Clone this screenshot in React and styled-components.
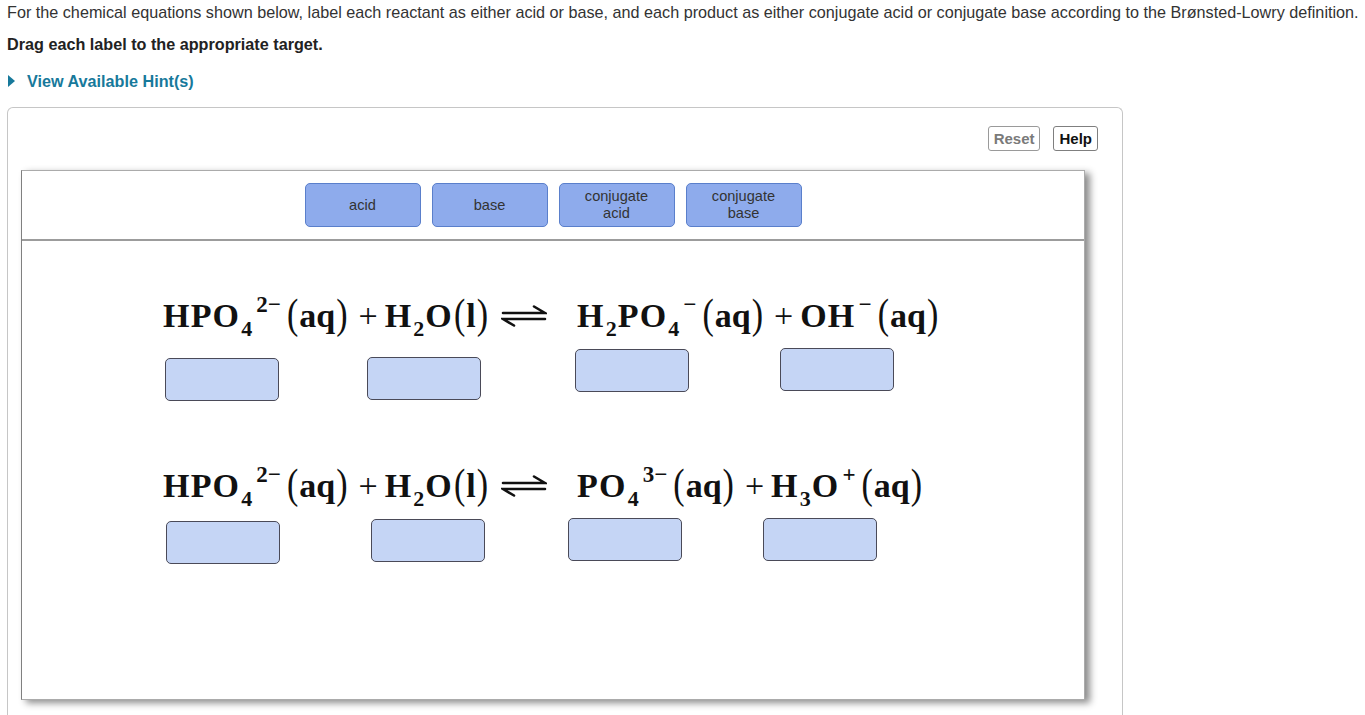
import React from "react";
import styled, { createGlobalStyle } from "styled-components";

const GlobalStyle = createGlobalStyle`
    html, body {
        margin: 0;
        padding: 0;
        overflow: hidden;
        background: #fff;
        font-family: "Liberation Sans", Arial, sans-serif;
        color: #333;
    }
`;

const Page = styled.div`
    padding: 3px 0 0 7px;
`;

const Prompt = styled.p`
    margin: 0;
    font-size: 16.2px;
    line-height: 18px;
    white-space: nowrap;
`;

const Instruction = styled.p`
    margin: 14px 0 0;
    font-size: 16.2px;
    line-height: 18px;
    font-weight: bold;
    color: #222;
`;

const HintToggle = styled.div`
    display: flex;
    align-items: center;
    gap: 12px;
    margin-top: 19px;
    padding-left: 1px;
    font-size: 16.2px;
    line-height: 18px;
    font-weight: bold;
    color: #17799b;
`;

const Caret = styled.span`
    width: 0;
    height: 0;
    border-top: 6px solid transparent;
    border-bottom: 6px solid transparent;
    border-left: 7px solid #17799b;
`;

const Panel = styled.div`
    margin-top: 17px;
    width: 1116px;
    height: 640px;
    box-sizing: border-box;
    border: 1px solid #c6c6c6;
    border-bottom: none;
    border-radius: 6px 6px 0 0;
`;

const Toolbar = styled.div`
    display: flex;
    justify-content: flex-end;
    gap: 13px;
    padding: 18px 24px 0 0;
`;

const ToolButton = styled.button`
    height: 25px;
    padding: 0 5px;
    border: 1px solid ${p => (p.$muted ? "#9a9a9a" : "#7f7f7f")};
    border-radius: 3px;
    background: #fff;
    font-family: "Liberation Sans", Arial, sans-serif;
    font-size: 15px;
    font-weight: bold;
    color: ${p => (p.$muted ? "#7a7a7a" : "#111")};
`;

const Canvas = styled.div`
    margin: 19px 0 0 13px;
    width: 1064px;
    height: 530px;
    box-sizing: border-box;
    border: 1px solid #ababab;
    border-left-color: #808080;
    background: #fff;
    box-shadow: 5px 3px 7px rgba(0, 0, 0, 0.45);
`;

const LabelBank = styled.div`
    display: flex;
    justify-content: center;
    gap: 11px;
    height: 70px;
    padding-top: 12px;
    box-sizing: border-box;
    border-bottom: 2px solid #9c9c9c;
`;

const Label = styled.div`
    display: flex;
    align-items: center;
    justify-content: center;
    width: 116px;
    height: 44px;
    box-sizing: border-box;
    border: 1px solid #5a7fcb;
    border-radius: 5px;
    background: #8eabec;
    font-size: 14.6px;
    line-height: 17px;
    text-align: center;
    color: #333;
`;

const Equation = styled.div`
    display: flex;
    align-items: baseline;
    margin-top: ${p => p.$top}px;
    padding-left: 141px;
    height: 44px;
    font-family: "Liberation Serif", "Times New Roman", serif;
    font-weight: bold;
    font-size: 34px;
    line-height: 44px;
    color: #111;
    white-space: nowrap;
`;

const Species = styled.span`
    letter-spacing: 1.2px;
`;

const Sub = styled.span`
    font-size: 22px;
    position: relative;
    top: 9px;
    margin: 0 1px;
`;

const Sup = styled.span`
    font-size: 23px;
    position: relative;
    top: -15px;
    margin: 0 5px 0 3px;
`;

const Paren = styled.span`
    display: inline-block;
    margin: 0 1px;
    font-weight: normal;
    transform: scaleY(1.22);
    transform-origin: 50% 62%;
`;

const Plus = styled.span`
    font-weight: normal;
    margin: 0 7px 0 10px;
`;

const ArrowBox = styled.span`
    display: inline-flex;
    align-self: center;
    margin: 0 30px 0 12px;
`;

const TargetRow = styled.div`
    display: flex;
    align-items: flex-start;
    margin-top: ${p => p.$top}px;
    padding-left: ${p => p.$left}px;
    height: 53px;
`;

const Target = styled.div`
    width: 114px;
    height: 43px;
    box-sizing: border-box;
    margin-left: ${p => p.$gap || 0}px;
    margin-top: ${p => p.$dy || 0}px;
    border: 1px solid #4a4a58;
    border-radius: 5px;
    background: #c5d5f5;
`;

const Equilibrium = () => (
    <ArrowBox>
        <svg width="46" height="22" viewBox="0 0 46 22">
            <g stroke="#111" strokeWidth="2.6" strokeLinecap="round" fill="none">
                <path d="M2 8 H44 L33 1.5" />
                <path d="M44 14 H2 L13 20.5" />
            </g>
        </svg>
    </ArrowBox>
);

const Phase = ({ children }) => (
    <>
        <Paren>(</Paren>
        {children}
        <Paren>)</Paren>
    </>
);

const App = () => {
    return (
        <Page>
            <GlobalStyle />
            <Prompt>
                For the chemical equations shown below, label each reactant as either acid or base, and each product as
                either conjugate acid or conjugate base according to the Brønsted-Lowry definition.
            </Prompt>
            <Instruction>Drag each label to the appropriate target.</Instruction>
            <HintToggle>
                <Caret />
                View Available Hint(s)
            </HintToggle>

            <Panel>
                <Toolbar>
                    <ToolButton type="button" $muted>
                        Reset
                    </ToolButton>
                    <ToolButton type="button">Help</ToolButton>
                </Toolbar>

                <Canvas>
                    <LabelBank>
                        <Label>acid</Label>
                        <Label>base</Label>
                        <Label>
                            conjugate
                            <br />
                            acid
                        </Label>
                        <Label>
                            conjugate
                            <br />
                            base
                        </Label>
                    </LabelBank>

                    <Equation $top={53}>
                        <Species>HPO</Species>
                        <Sub>4</Sub>
                        <Sup>2−</Sup>
                        <Phase>aq</Phase>
                        <Plus>+</Plus>
                        <Species>H</Species>
                        <Sub>2</Sub>
                        <Species>O</Species>
                        <Phase>l</Phase>
                        <Equilibrium />
                        <Species>H</Species>
                        <Sub>2</Sub>
                        <Species>PO</Species>
                        <Sub>4</Sub>
                        <Sup>−</Sup>
                        <Phase>aq</Phase>
                        <Plus>+</Plus>
                        <Species>OH</Species>
                        <Sup>−</Sup>
                        <Phase>aq</Phase>
                    </Equation>
                    <TargetRow $top={10} $left={143}>
                        <Target $dy={10} />
                        <Target $gap={88} $dy={9} />
                        <Target $gap={94} $dy={1} />
                        <Target $gap={91} />
                    </TargetRow>

                    <Equation $top={63}>
                        <Species>HPO</Species>
                        <Sub>4</Sub>
                        <Sup>2−</Sup>
                        <Phase>aq</Phase>
                        <Plus>+</Plus>
                        <Species>H</Species>
                        <Sub>2</Sub>
                        <Species>O</Species>
                        <Phase>l</Phase>
                        <Equilibrium />
                        <Species>PO</Species>
                        <Sub>4</Sub>
                        <Sup>3−</Sup>
                        <Phase>aq</Phase>
                        <Plus>+</Plus>
                        <Species>H</Species>
                        <Sub>3</Sub>
                        <Species>O</Species>
                        <Sup>+</Sup>
                        <Phase>aq</Phase>
                    </Equation>
                    <TargetRow $top={10} $left={144}>
                        <Target $dy={3} />
                        <Target $gap={91} $dy={1} />
                        <Target $gap={83} />
                        <Target $gap={81} />
                    </TargetRow>
                </Canvas>
            </Panel>
        </Page>
    );
};

export default App;
